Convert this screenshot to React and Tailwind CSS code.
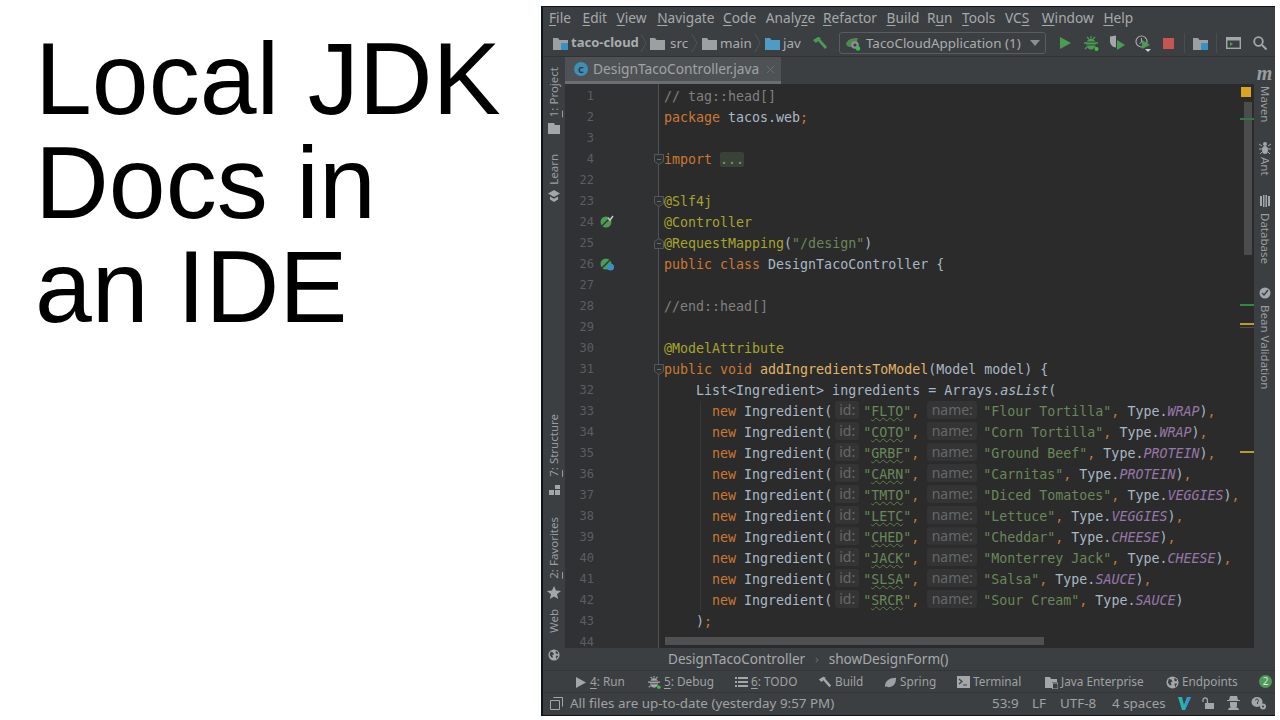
import React from "react";

const K = ({ children }) => <span className="text-[#cc7832]">{children}</span>;
const A = ({ children }) => <span className="text-[#a8a32c]">{children}</span>;
const C = ({ children }) => <span className="text-[#808080]">{children}</span>;
const S = ({ children }) => <span className="text-[#6a8759]">{children}</span>;
const P = ({ children }) => <span className="text-[#9876aa] italic">{children}</span>;
const Sq = ({ children }) => (
  <span className="text-[#6a8759] underline decoration-wavy decoration-[#5f7d48] decoration-1 underline-offset-1">{children}</span>
);
const Hint = ({ children, w }) => (
  <span className={`inline-block h-[18px] leading-[17px] align-[1px] rounded-[3px] bg-[#343434] text-[#65686a] text-[14px] text-center font-['Noto_Sans',sans-serif] ${w}`}>
    {children}
  </span>
);

const ingredient = (id, name, type, tail) => (
  <>
    {"      "}<K>new</K> Ingredient(
    <Hint w="w-[24px] ml-[3px] mr-[4px]">id:</Hint>
    <S>"</S><Sq>{id}</Sq><S>"</S><span className="text-[#cc7832]">,</span>{" "}
    <Hint w="w-[50px] mr-[6px]">name:</Hint>
    <S>"{name}"</S><span className="text-[#cc7832]">,</span> Type.<P>{type}</P>){tail && <span className="text-[#cc7832]">,</span>}
  </>
);

const lines = [
  [1, <C>// tag::head[]</C>],
  [2, <><K>package</K> tacos.web<K>;</K></>],
  [3, ""],
  [4, <><K>import</K> <span className="text-[#7f9a70] bg-[#3a4238] px-0 rounded-[2px]">...</span></>],
  [22, ""],
  [23, <A>@Slf4j</A>],
  [24, <A>@Controller</A>],
  [25, <><A>@RequestMapping</A>(<S>"/design"</S>)</>],
  [26, <><K>public class</K> DesignTacoController {"{"}</>],
  [27, ""],
  [28, <C>//end::head[]</C>],
  [29, ""],
  [30, <A>@ModelAttribute</A>],
  [31, <><K>public void</K> <span className="text-[#e0b463]">addIngredientsToModel</span>(Model model) {"{"}</>],
  [32, <>{"    "}List&lt;Ingredient&gt; ingredients = Arrays.<span className="italic">asList</span>(</>],
  [33, ingredient("FLTO", "Flour Tortilla", "WRAP", true)],
  [34, ingredient("COTO", "Corn Tortilla", "WRAP", true)],
  [35, ingredient("GRBF", "Ground Beef", "PROTEIN", true)],
  [36, ingredient("CARN", "Carnitas", "PROTEIN", true)],
  [37, ingredient("TMTO", "Diced Tomatoes", "VEGGIES", true)],
  [38, ingredient("LETC", "Lettuce", "VEGGIES", true)],
  [39, ingredient("CHED", "Cheddar", "CHEESE", true)],
  [40, ingredient("JACK", "Monterrey Jack", "CHEESE", true)],
  [41, ingredient("SLSA", "Salsa", "SAUCE", true)],
  [42, ingredient("SRCR", "Sour Cream", "SAUCE", false)],
  [43, <>{"    "}){<K>;</K>}</>],
  [44, ""],
];

const U = ({ children }) => <span className="underline underline-offset-2">{children}</span>;

const Folder = ({ color = "#9da0a2", badge }) => (
  <svg width="15" height="13" viewBox="0 0 15 13" className="shrink-0">
    <path d="M0 1h5l1.500 2H15v10H0z" fill={color} />
    {badge && <rect x="8" y="6" width="7" height="7" fill={badge} />}
  </svg>
);
const Chevron = () => (
  <svg width="8" height="22" viewBox="0 0 8 22" className="shrink-0">
    <path d="M1 2l5 9-5 9" fill="none" stroke="#505355" strokeWidth="1" />
  </svg>
);
const Hammer = ({ color = "#499c54", size = 16 }) => (
  <svg width={size} height={size} viewBox="0 0 16 16" className="shrink-0">
    <path d="M1 5l5-3 3 1-1 1 7 8-2 2-7-8-2 2z" fill={color} />
  </svg>
);
const Leaf = ({ color = "#9da0a2", w = 13 }) => (
  <svg width={w} height={w} viewBox="0 0 14 14" className="shrink-0">
    <path d="M1 12C1 5 6 2 13 2c0 7-3 10-8 10-1 0-2-.5-2.500-1" fill={color} />
  </svg>
);
const Bug = ({ color = "#499c54", dot = "#3fbf3f", size = 15 }) => (
  <svg width={size} height={size} viewBox="0 0 15 15" className="shrink-0">
    <path d="M7 0v2M3 1l2 2M11 1L9 3M0 7h3M11 7h3M1 13l2-2M13 13l-2-2" stroke={color} strokeWidth="1.300" />
    <ellipse cx="7" cy="8" rx="4.500" ry="5.500" fill={color} />
    <path d="M3 6h8M3 9h8" stroke="#3c3f41" strokeWidth="1" />
    <circle cx="12.500" cy="13" r="2" fill={dot} />
  </svg>
);
const Globe = ({ size = 13 }) => (
  <svg width={size} height={size} viewBox="0 0 14 14" className="shrink-0">
    <circle cx="7" cy="7" r="6.500" fill="#a4a7a9" />
    <path d="M3 3l3 1 1 2-2 1 1 3-2 0-2-3zM9 2l3 2-1 2-2-1zM9 8l3 0-2 4z" fill="#3c3f41" />
  </svg>
);
const Term = () => (
  <svg width="13" height="12" viewBox="0 0 13 12" className="shrink-0">
    <rect width="13" height="12" fill="#a4a7a9" />
    <path d="M2 3l3 2.500L2 8" fill="none" stroke="#3c3f41" strokeWidth="1.200" />
    <path d="M6 9h4" stroke="#3c3f41" />
  </svg>
);
const Spring = ({ check, blue }) => (
  <svg width="14" height="14" viewBox="0 0 14 14" className="shrink-0 -mt-[1px]">
    <circle cx="6" cy="7" r="5.500" fill="#4f9a57" />
    <path d="M2 11L10 3" stroke="#2f3031" strokeWidth="1.200" />
    {check && <path d="M8 3l2 2 3-4" fill="none" stroke="#c8c8c8" strokeWidth="1.500" />}
    {blue && <circle cx="10.500" cy="10" r="3.500" fill="#3592c4" />}
  </svg>
);
const RunConfig = () => (
  <svg width="16" height="15" viewBox="0 0 16 15" className="shrink-0">
    <path d="M0 8c1-4 5-6 12-6-1 2-1 4-1 6-2 2-4 3-7 3-2 0-3-1-4-3z" fill="#4f8a50" />
    <circle cx="9" cy="9" r="3.800" fill="#8d9092" />
    <circle cx="9" cy="9" r="1.600" fill="#3c3f41" />
    <circle cx="12" cy="12.500" r="2.200" fill="#35c24a" />
  </svg>
);
const FoldMark = ({ top, up }) => (
  <svg width="10" height="11" viewBox="0 0 10 11" className="absolute left-[89px]" style={{ top }}>
    <path d={up ? "M.5 10.500v-7L5 .5l4.500 3v7z" : "M.5.5h9v7L5 10.500.5 7.500z"} fill="#303132" stroke="#55585a" />
    <path d="M3 5.500h4" stroke="#6a6d6f" />
  </svg>
);

const Tool = ({ icon, children, w }) => (
  <div className={`flex items-center gap-[3px] ${w}`}>
    {icon}
    <span>{children}</span>
  </div>
);

const V = ({ children, flip }) => (
  <span className={`[writing-mode:vertical-rl] text-[11.500px] leading-[16px] whitespace-nowrap ${flip ? "rotate-180" : ""}`}>{children}</span>
);

export default function App() {
  return (
    <div className="flex w-[1280px] h-[720px] bg-white overflow-hidden font-['Noto_Sans',sans-serif]">
      <div className="w-[541px] shrink-0 pl-[35px] pt-[27px]">
        <h1 className="font-['Liberation_Sans',sans-serif] text-black text-[102.200px] leading-[104px] font-normal">
          Local JDK<br />Docs in<br />an IDE
        </h1>
      </div>

      <div className="mt-[6px] w-[734px] h-[710px] flex flex-col bg-[#3c3f41] border-t border-l-2 border-b border-[#10151c] text-[#a9adaf] overflow-hidden">
        {/* Menu */}
        <div className="h-[23px] shrink-0 flex items-center pl-[6px] gap-[9.600px] text-[13.700px] text-[#a6a9ab]">
          <span><U>F</U>ile</span>
          <span className="ml-[2px]"><U>E</U>dit</span>
          <span><U>V</U>iew</span>
          <span className="ml-[1px]"><U>N</U>avigate</span>
          <span className="-ml-[1px]"><U>C</U>ode</span>
          <span>Analy<U>z</U>e</span>
          <span className="-ml-[2px]"><U>R</U>efactor</span>
          <span><U>B</U>uild</span>
          <span className="-ml-[2px]">R<U>u</U>n</span>
          <span><U>T</U>ools</span>
          <span>VC<U>S</U></span>
          <span className="ml-[3px]"><U>W</U>indow</span>
          <span><U>H</U>elp</span>
        </div>

        {/* Navigation bar */}
        <div className="h-[27px] shrink-0 flex items-center pl-[10px] text-[13.400px] border-b border-[#323232] whitespace-nowrap">
          <Folder badge="#3592c4" />
          <span className="ml-[3px] w-[66px] font-bold text-[13px] text-[#a9adaf]">taco-cloud</span>
          <span className="mx-[2.500px]"><Chevron /></span>
          <Folder />
          <span className="ml-[5px] w-[18px]">src</span>
          <span className="mx-[3px]"><Chevron /></span>
          <Folder />
          <span className="ml-[3px] w-[30px]">main</span>
          <span className="mx-[3.500px]"><Chevron /></span>
          <Folder color="#4e9cc4" />
          <span className="ml-[3px] w-[17px]">jav</span>
          <span className="ml-[12px]"><Hammer /></span>
          <div className="ml-[11px] w-[207px] h-[22px] border border-[#595c5e] rounded-[3px] flex items-center pl-[6px]">
            <RunConfig />
            <span className="ml-[4px] w-[156px]">TacoCloudApplication (1)</span>
            <svg width="10" height="6" viewBox="0 0 10 6" className="ml-[8px]"><path d="M0 0h10L5 6z" fill="#8d9092" /></svg>
          </div>
          <svg width="11" height="12" viewBox="0 0 11 12" className="ml-[14px]"><path d="M0 0l11 6-11 6z" fill="#499c54" /></svg>
          <span className="ml-[13px]"><Bug /></span>
          <svg width="17" height="16" viewBox="0 0 17 16" className="ml-[10px]">
            <path d="M1 1.500l6-1v12c-3 0-6-3-6-6z" fill="#a4a7a9" /><path d="M8 5l8 5-8 5z" fill="#499c54" />
          </svg>
          <svg width="17" height="17" viewBox="0 0 17 17" className="ml-[9px]">
            <circle cx="6.500" cy="6.500" r="5.500" fill="none" stroke="#a4a7a9" strokeWidth="1.200" /><path d="M6.500 3v4l-2 2" stroke="#a4a7a9" fill="none" />
            <path d="M7 5l8 5-8 4z" fill="#499c54" /><path d="M10 14h6l-3 3z" fill="#d0d0d0" />
          </svg>
          <div className="ml-[11px] w-[11px] h-[11px] bg-[#c75450]" />
          <div className="ml-[10px] w-px h-[20px] bg-[#4a4d4f]" />
          <span className="ml-[8px]"><Folder badge="#3592c4" /></span>
          <div className="ml-[8px] w-px h-[20px] bg-[#4a4d4f]" />
          <svg width="15" height="12" viewBox="0 0 15 12" className="ml-[9px]">
            <rect x=".7" y=".7" width="13.600" height="10.600" fill="none" stroke="#a4a7a9" strokeWidth="1.400" /><rect x="1" y="1" width="13" height="2.500" fill="#a4a7a9" /><path d="M4 5l3 2-3 2z" fill="#499c54" />
          </svg>
          <svg width="14" height="14" viewBox="0 0 14 14" className="ml-[12px]">
            <circle cx="5.500" cy="5.500" r="4.300" fill="none" stroke="#a4a7a9" strokeWidth="1.800" /><path d="M9 9l4.500 4.500" stroke="#a4a7a9" strokeWidth="2" />
          </svg>
        </div>

        {/* Middle */}
        <div className="h-[613px] shrink-0 flex">
          {/* Left rail */}
          <div className="w-[22px] shrink-0 flex flex-col items-center justify-between pt-[10px] pb-[9px] text-[#9a9da0]">
            <div className="flex flex-col items-center">
              <V flip><U>1</U>: Project</V>
              <svg width="12" height="11" viewBox="0 0 12 11" className="mt-[6px]"><path d="M0 0h6l1 2h5v9H0z" fill="#a4a7a9" /></svg>
              <div className="mt-[20px] flex"><V flip>Learn</V></div>
              <svg width="12" height="12" viewBox="0 0 12 12" className="mt-[5px]"><path d="M6 0l6 3.500-6 3.500-6-3.500z" fill="#a4a7a9" /><path d="M2 6.500l4 2.300 4-2.300V9.500L6 12 2 9.500z" fill="#a4a7a9" /></svg>
            </div>
            <div className="flex flex-col items-center">
              <V flip><U>7</U>: Structure</V>
              <svg width="11" height="10" viewBox="0 0 11 10" className="mt-[8px]"><path d="M6 0h5v4H6zM0 5h5v5H0zM6 5h5v5H6z" fill="#a4a7a9" /></svg>
              <div className="mt-[22px] flex"><V flip><U>2</U>: Favorites</V></div>
              <svg width="14" height="13" viewBox="0 0 14 13" className="mt-[7px]"><path d="M7 0l2 4.500 5 .5-4 3.200 1.200 4.800L7 10.500 2.800 13 4 8.200 0 5l5-.5z" fill="#a4a7a9" /></svg>
              <div className="mt-[10px] flex"><V flip>Web</V></div>
              <div className="mt-[16px]"><Globe size={12} /></div>
            </div>
          </div>

          {/* Center */}
          <div className="flex-1 min-w-0 flex flex-col">
            <div className="h-[27px] shrink-0 flex">
              <div className="w-[216px] h-[27px] bg-[#4e5254] border-b-[3px] border-[#6b6e70] flex items-center pl-[9px] text-[13.750px] text-[#a0a3a5]">
                <span className="w-[14px] h-[14px] rounded-full bg-[#3f8fb5] flex items-center justify-center text-[9px] leading-none text-[#22384a] font-bold">C</span>
                <span className="ml-[5px]">DesignTacoController.java</span>
                <svg width="9" height="9" viewBox="0 0 9 9" className="ml-[7px]"><path d="M1 1l7 7M8 1L1 8" stroke="#6a6d6f" strokeWidth="1" /></svg>
              </div>
            </div>

            <div className="relative h-[564px] shrink-0 flex bg-[#2b2b2b] overflow-hidden">
              {/* Gutter */}
              <div className="w-[94px] shrink-0 bg-[#303132] border-r border-[#505254] pt-[2px] font-['DejaVu_Sans_Mono',monospace] text-[12px] text-[#5b5e60]">
                {lines.map(([n]) => (
                  <div key={n} className="h-[21px] leading-[21px] flex items-center">
                    <span className="w-[29px] text-right">{n}</span>
                    <span className="ml-[6px] w-[14px] h-[14px] flex">
                      {n === 24 && <Spring check />}
                      {n === 26 && <Spring blue />}
                    </span>
                  </div>
                ))}
              </div>
              {/* Code */}
              <div className="flex-1 min-w-0 pt-[2px] pl-[5px] font-['DejaVu_Sans_Mono',monospace] text-[13.300px] text-[#a9b7c6] whitespace-pre">
                {lines.map(([n, c]) => (
                  <div key={n} className="h-[21px] leading-[21px]">{c}</div>
                ))}
              </div>
              {/* Fold marks */}
              <FoldMark top={70} />
              <FoldMark top={112} />
              <FoldMark top={154} up />
              <FoldMark top={280} />
              {/* Indent guide */}
              <div className="absolute left-[135px] top-[317px] w-px h-[210px] bg-[#373737]" />
              {/* Right stripe */}
              <div className="absolute right-0 top-[3px] w-[13px] h-[10px] flex justify-start">
                <div className="w-[10px] h-[10px] bg-[#d9a520]" />
              </div>
              <div className="absolute right-[2px] top-[18px] w-[8px] h-[153px] bg-[#4b4c4d]" />
              <div className="absolute right-0 top-[34px] w-[14px] h-[2px] bg-[#2f7a3a]" />
              <div className="absolute right-0 top-[220px] w-[14px] h-[2px] bg-[#2f8a3f]" />
              <div className="absolute right-0 top-[239px] w-[14px] h-[2px] bg-[#b89a3a]" />
              <div className="absolute right-0 top-[243px] w-[14px] h-px bg-[#5e4d36]" />
              <div className="absolute right-0 top-[367px] w-[14px] h-[2px] bg-[#b89a3a]" />
              {/* Horizontal scrollbar */}
              <div className="absolute left-[100px] bottom-[3px] w-[379px] h-[8px] bg-[#4f5051]" />
            </div>

            <div className="h-[22px] shrink-0 flex items-center pl-[103px] text-[13.600px] text-[#a6a9ab]">
              <span>DesignTacoController</span>
              <span className="ml-[10px] text-[#6a6d6f] text-[11px]">›</span>
              <span className="ml-[10px]">showDesignForm()</span>
            </div>
          </div>

          {/* Right rail */}
          <div className="w-[21px] shrink-0 flex flex-col items-center pt-[9px] text-[#9a9da0]">
            <span className="font-['Liberation_Serif',serif] font-bold italic text-[20px] leading-[14px]">m</span>
            <div className="mt-[6px] flex"><V>Maven</V></div>
            <svg width="12" height="13" viewBox="0 0 12 13" className="mt-[19px]"><ellipse cx="6" cy="9" rx="3" ry="4" fill="#a4a7a9" /><circle cx="6" cy="3" r="2" fill="#a4a7a9" /><path d="M0 3l3 2M12 3L9 5M0 8h3M12 8H9M1 13l2-2M11 13L9 11" stroke="#a4a7a9" /></svg>
            <div className="mt-[3px] flex"><V>Ant</V></div>
            <svg width="12" height="12" viewBox="0 0 12 12" className="mt-[19px]"><path d="M1 1h2v10H1zM4 0h1.500v12H4zM6.500 0H8v12H6.500zM9 1h2v10H9z" fill="#a4a7a9" /></svg>
            <div className="mt-[6px] flex"><V>Database</V></div>
            <svg width="12" height="12" viewBox="0 0 12 12" className="mt-[23px]"><circle cx="6" cy="6" r="5.500" fill="#a4a7a9" /><path d="M3 6l2 2 4-5" stroke="#3c3f41" strokeWidth="1.400" fill="none" /></svg>
            <div className="mt-[6px] flex"><V>Bean Validation</V></div>
          </div>
        </div>

        {/* Tool windows strip */}
        <div className="h-[22px] shrink-0 flex items-center pl-[33px] pt-[1px] text-[11.800px] text-[#9fa2a4] border-t border-[#333537] relative">
          <Tool icon={<svg width="10" height="11" viewBox="0 0 10 11" className="mr-px"><path d="M0 0l10 5.500L0 11z" fill="#a4a7a9" /></svg>} w="w-[72px]"><U>4</U>: Run</Tool>
          <Tool icon={<Bug color="#a4a7a9" size={13} />} w="w-[87px]"><U>5</U>: Debug</Tool>
          <Tool icon={<svg width="13" height="10" viewBox="0 0 13 10"><path d="M0 0h2v2H0zM3 0h10v2H3zM0 4h2v2H0zM3 4h10v2H3zM0 8h2v2H0zM3 8h10v2H3z" fill="#a4a7a9" /></svg>} w="w-[83px]"><U>6</U>: TODO</Tool>
          <Tool icon={<Hammer color="#a4a7a9" size={14} />} w="w-[66px]">Build</Tool>
          <Tool icon={<Leaf w={13} />} w="w-[73px]">Spring</Tool>
          <Tool icon={<Term />} w="w-[88px]">Terminal</Tool>
          <Tool icon={<svg width="13" height="13" viewBox="0 0 13 13"><path d="M0 1h5l1 2h6v3H7v6H0z" fill="#a4a7a9" /><rect x="7.500" y="7" width="5.500" height="6" fill="none" stroke="#a4a7a9" /></svg>} w="w-[121px]">Java Enterprise</Tool>
          <Tool icon={<Globe />} w="w-[100px]">Endpoints</Tool>
          <span className="absolute right-[3px] top-[4px] w-[13px] h-[13px] rounded-full bg-[#4f9a57] text-[10px] leading-[13px] text-center text-[#d8e8d8]">2</span>
        </div>

        {/* Status bar */}
        <div className="h-[23px] shrink-0 flex items-center pl-[7px] pb-[2px] text-[13.400px] text-[#9fa2a4] border-t border-[#333537] whitespace-nowrap">
          <svg width="13" height="13" viewBox="0 0 13 13" className="shrink-0"><path d="M3.500.5h9v9M.5 3.500h9v9h-9z" fill="none" stroke="#a4a7a9" /></svg>
          <span className="ml-[7px] w-[266px]">All files are up-to-date (yesterday 9:57 PM)</span>
          <span className="ml-[156px] w-[28px]">53:9</span>
          <span className="ml-[12px] w-[16px]">LF</span>
          <span className="ml-[12px] w-[40px]">UTF-8</span>
          <span className="ml-[12px] w-[54px]">4 spaces</span>
          <svg width="13" height="14" viewBox="0 0 13 14" className="ml-[12px] shrink-0"><path d="M0 1h4l2 8 3-8h4l-6 13H4z" fill="#27b3b0" /><path d="M9 1h4l-6 13 1-6z" fill="#3b8fd8" /></svg>
          <svg width="13" height="12" viewBox="0 0 13 12" className="ml-[11px] shrink-0"><path d="M3 6h9v6H3z" fill="#a4a7a9" /><path d="M1 5V3a2.200 2.200 0 0 1 4.400 0v3" stroke="#a4a7a9" strokeWidth="1.300" fill="none" /></svg>
          <svg width="13" height="14" viewBox="0 0 13 14" className="ml-[12px] shrink-0"><path d="M3 0h7l1 4H2zM0 4h13v1H0zM3 6h7v3a3 3 0 0 1-7 0z" fill="#a4a7a9" /><path d="M1 14c0-2 2-3 5.500-3s5.500 1 5.500 3z" fill="#a4a7a9" /></svg>
          <svg width="16" height="14" viewBox="0 0 16 14" className="ml-[11px] shrink-0"><ellipse cx="6" cy="6" rx="5.500" ry="5" fill="#a4a7a9" /><path d="M4.500 4.500a1.500 1.500 0 1 1 2 1.500V8" stroke="#3c3f41" fill="none" /><circle cx="12" cy="10.500" r="3" fill="#a4a7a9" /><circle cx="12" cy="10.500" r="1" fill="#3c3f41" /></svg>
        </div>
      </div>
    </div>
  );
}
